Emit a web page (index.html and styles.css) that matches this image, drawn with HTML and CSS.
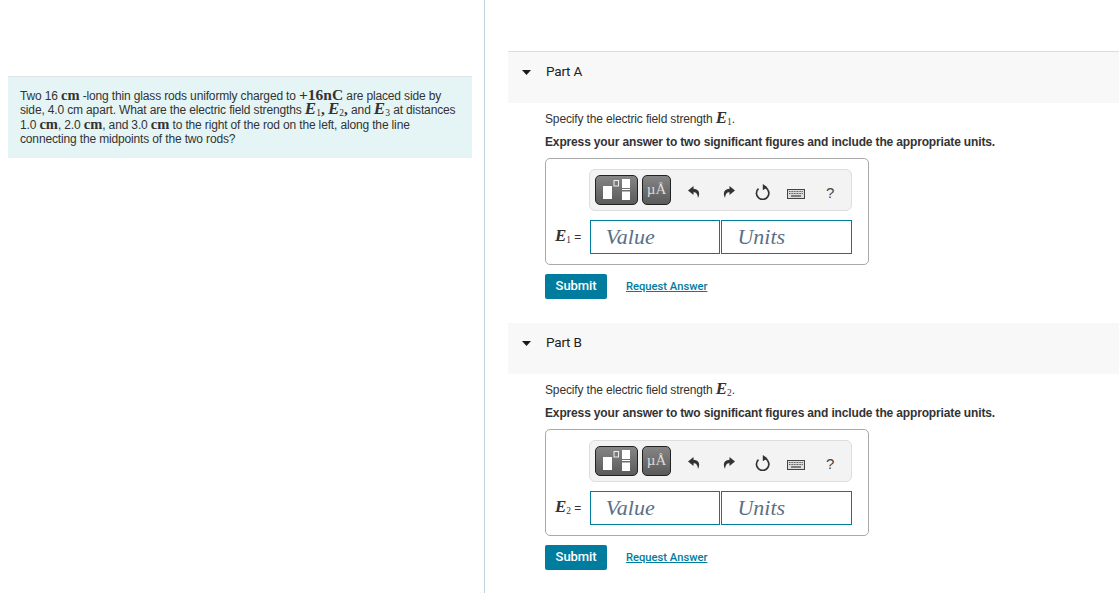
FILE: index.html
```html
<!DOCTYPE html>
<html lang="en">
<head>
    <meta charset="UTF-8">
    <title>Part A and Part B</title>
    <link rel="stylesheet" href="styles.css">
</head>
<body>
    <div class="page">
        <!-- problem statement -->
        <div class="left-col">
            <div class="problem">
                Two 16 <span class="m">cm</span> -long thin glass rods uniformly charged to <span class="m big">+16nC</span> are placed side by<br>
                side, 4.0 cm apart. What are the electric field strengths <span class="m big"><i>E</i><sub>1</sub>,</span> <span class="m big"><i>E</i><sub>2</sub>,</span> and <span class="m big"><i>E</i><sub>3</sub></span> at distances<br>
                1.0 <span class="m">cm</span>, 2.0 <span class="m">cm</span>, and 3.0 <span class="m">cm</span> to the right of the rod on the left, along the line<br>
                connecting the midpoints of the two rods?
            </div>
        </div>

        <div class="right-col">
            <!-- part a -->
            <section class="part">
                <div class="part-head">
                    <svg class="caret" width="9" height="5" viewBox="0 0 9 5"><path d="M0 0h9L4.5 5z" fill="#1a1a1a"/></svg>
                    <span>Part A</span>
                </div>
                <div class="part-body">
                    <p class="ask">Specify the electric field strength <span class="m big"><i>E</i><sub>1</sub></span>.</p>
                    <p class="express">Express your answer to two significant figures and include the appropriate units.</p>
                    <div class="answer-box">
                        <div class="toolbar">
                            <button class="tool tool-frac">
                                <svg width="32" height="24" viewBox="0 0 32 24">
                                    <rect x="2" y="8" width="9" height="13" fill="#fff"/>
                                    <rect x="13" y="2.500" width="4.500" height="5.500" fill="none" stroke="#eee"/>
                                    <rect x="21" y="1" width="8" height="9" fill="#fff"/>
                                    <rect x="21" y="11" width="8" height="1" fill="#fff"/>
                                    <rect x="21" y="13.500" width="8" height="8.500" fill="#fff"/>
                                </svg>
                            </button>
                            <button class="tool tool-unit">&micro;&Aring;</button>
                            <svg class="ico ico-undo" width="12" height="12" viewBox="0 0 12 12"><path d="M5.500 0 0 4.500 5.500 9V6.300C8 6.300 9.500 7.500 10 12 12.500 7 11 3 5.500 2.800z" fill="#333"/></svg>
                            <svg class="ico ico-redo" width="12" height="12" viewBox="0 0 12 12"><path d="M6.500 0 12 4.500 6.500 9V6.300C4 6.300 2.500 7.500 2 12-.5 7 1 3 6.500 2.800z" fill="#333"/></svg>
                            <svg class="ico ico-reset" width="16" height="16" viewBox="0 0 16 16"><path d="M10.200 3.600A6.200 6.200 0 1 1 3.500 4.600" fill="none" stroke="#333" stroke-width="1.700"/><path d="M7.800 0l4.700 3.300-4.700 3z" fill="#333"/></svg>
                            <svg class="ico ico-keys" width="18" height="10" viewBox="0 0 18 10"><rect x=".5" y=".5" width="17" height="9" fill="#ddd" stroke="#444"/><path d="M2 2.500h14M2 4.500h14" stroke="#555" stroke-dasharray="1 .6"/><path d="M4 7h10" stroke="#555" stroke-width="1.400"/></svg>
                            <span class="help">?</span>
                        </div>
                        <div class="input-row">
                            <label class="eq"><span class="m big"><i>E</i><sub>1</sub></span> =</label>
                            <div class="field field-value">Value</div>
                            <div class="field field-units">Units</div>
                        </div>
                    </div>
                    <div class="actions">
                        <button class="submit">Submit</button>
                        <a class="request" href="#">Request Answer</a>
                    </div>
                </div>
            </section>

            <!-- part b -->
            <section class="part part-b">
                <div class="part-head">
                    <svg class="caret" width="9" height="5" viewBox="0 0 9 5"><path d="M0 0h9L4.5 5z" fill="#1a1a1a"/></svg>
                    <span>Part B</span>
                </div>
                <div class="part-body">
                    <p class="ask">Specify the electric field strength <span class="m big"><i>E</i><sub>2</sub></span>.</p>
                    <p class="express">Express your answer to two significant figures and include the appropriate units.</p>
                    <div class="answer-box">
                        <div class="toolbar">
                            <button class="tool tool-frac">
                                <svg width="32" height="24" viewBox="0 0 32 24">
                                    <rect x="2" y="8" width="9" height="13" fill="#fff"/>
                                    <rect x="13" y="2.500" width="4.500" height="5.500" fill="none" stroke="#eee"/>
                                    <rect x="21" y="1" width="8" height="9" fill="#fff"/>
                                    <rect x="21" y="11" width="8" height="1" fill="#fff"/>
                                    <rect x="21" y="13.500" width="8" height="8.500" fill="#fff"/>
                                </svg>
                            </button>
                            <button class="tool tool-unit">&micro;&Aring;</button>
                            <svg class="ico ico-undo" width="12" height="12" viewBox="0 0 12 12"><path d="M5.500 0 0 4.500 5.500 9V6.300C8 6.300 9.500 7.500 10 12 12.500 7 11 3 5.500 2.800z" fill="#333"/></svg>
                            <svg class="ico ico-redo" width="12" height="12" viewBox="0 0 12 12"><path d="M6.500 0 12 4.500 6.500 9V6.300C4 6.300 2.500 7.500 2 12-.5 7 1 3 6.500 2.800z" fill="#333"/></svg>
                            <svg class="ico ico-reset" width="16" height="16" viewBox="0 0 16 16"><path d="M10.200 3.600A6.200 6.200 0 1 1 3.500 4.600" fill="none" stroke="#333" stroke-width="1.700"/><path d="M7.800 0l4.700 3.300-4.700 3z" fill="#333"/></svg>
                            <svg class="ico ico-keys" width="18" height="10" viewBox="0 0 18 10"><rect x=".5" y=".5" width="17" height="9" fill="#ddd" stroke="#444"/><path d="M2 2.500h14M2 4.500h14" stroke="#555" stroke-dasharray="1 .6"/><path d="M4 7h10" stroke="#555" stroke-width="1.400"/></svg>
                            <span class="help">?</span>
                        </div>
                        <div class="input-row">
                            <label class="eq"><span class="m big"><i>E</i><sub>2</sub></span> =</label>
                            <div class="field field-value">Value</div>
                            <div class="field field-units">Units</div>
                        </div>
                    </div>
                    <div class="actions">
                        <button class="submit">Submit</button>
                        <a class="request" href="#">Request Answer</a>
                    </div>
                </div>
            </section>
        </div>
    </div>
</body>
</html>
```

FILE: styles.css
```css
:root {
    --teal: #007c9e;
    --text: #333;
}

body {
    margin: 0;
    background: #fff;
    color: var(--text);
    font-family: "Liberation Sans", Arial, sans-serif;
    font-size: 12px;
    letter-spacing: -0.15px;
    overflow: hidden;
}

.page {
    display: flex;
    height: 593px;
}

.left-col {
    width: 464px;
    flex: none;
    border-right: 1px solid #c3d3de;
    padding: 76px 12px 0 8px;
}

.problem {
    height: 57px;
    padding: 12px;
    background: #e5f5f6;
    border-top: 1px solid #dde6ea;
    line-height: 14.4px;
    white-space: nowrap;
}

.m {
    font-family: "Liberation Serif", serif;
    font-size: 14.500px;
    font-weight: bold;
    letter-spacing: 0;
    line-height: 0;
}

.m.big {
    font-size: 15.5px;
}

.m i {
    font-size: 17px;
}

.m sub {
    font-size: 9.5px;
    font-weight: normal;
    line-height: 0;
    vertical-align: -2px;
}

.right-col {
    flex: 1;
    padding: 51px 0 0 23px;
}

.part-head {
    height: 52px;
    box-sizing: border-box;
    display: flex;
    align-items: flex-start;
    gap: 15px;
    padding: 12px 0 0 14px;
    background: #f8f8f8;
    border-top: 1px solid #ddd;
    font-family: Roboto, sans-serif;
    font-size: 13.5px;
    line-height: 15px;
    letter-spacing: -0.2px;
    color: #222;
}

.caret {
    margin-top: 6px;
}

.part-body {
    padding: 7px 0 0 37px;
}

.ask {
    margin: 0;
    height: 24px;
    line-height: 19px;
}

.express {
    margin: 0;
    height: 24px;
    padding-top: 1px;
    box-sizing: border-box;
    font-weight: bold;
    line-height: 14px;
}

.answer-box {
    width: 324px;
    height: 107px;
    box-sizing: border-box;
    border: 1px solid #a9a9a9;
    border-radius: 5px;
    padding: 10px 16px 0 43px;
}

.toolbar {
    height: 42px;
    box-sizing: border-box;
    display: flex;
    align-items: flex-start;
    padding: 5px 0 0 5px;
    background: #f3f3f3;
    border: 1px solid #ddd;
    border-radius: 6px;
}

.tool {
    height: 30px;
    padding: 0;
    display: flex;
    align-items: center;
    justify-content: center;
    background: linear-gradient(#858585, #5a5a5a);
    border: 1px solid #222;
    border-radius: 5px;
}

.tool-frac {
    width: 43px;
}

.tool-unit {
    width: 29px;
    margin-left: 4px;
    padding-bottom: 2px;
    font-family: "Liberation Serif", serif;
    font-size: 15px;
    color: #ddd;
}

.ico {
    flex: none;
}

.ico-undo {
    margin: 11px 0 0 17px;
}

.ico-redo {
    margin: 11px 0 0 23px;
}

.ico-reset {
    margin: 9px 0 0 20px;
}

.ico-keys {
    margin: 14px 0 0 16px;
}

.help {
    margin: 9px 0 0 21px;
    font-size: 15px;
    line-height: 18px;
    color: #444;
}

.input-row {
    display: flex;
    align-items: center;
    margin: 9px 0 0 -34px;
}

.eq {
    width: 35px;
    white-space: nowrap;
}

.field {
    height: 34px;
    box-sizing: border-box;
    padding-left: 15px;
    border: 1px solid var(--teal);
    font-family: "Liberation Serif", serif;
    font-style: italic;
    font-size: 22px;
    line-height: 32px;
    letter-spacing: 0;
    color: #5a6f85;
}

.field-value {
    width: 131px;
    margin-right: 1px;
}

.field-units {
    width: 131px;
}

.actions {
    display: flex;
    align-items: center;
    margin-top: 9px;
}

.submit {
    width: 62px;
    height: 25px;
    padding: 0 0 2px;
    background: var(--teal);
    border: none;
    border-radius: 2px;
    font-family: Roboto, sans-serif;
    font-size: 13px;
    font-weight: 500;
    letter-spacing: -0.1px;
    color: #fff;
}

.request {
    margin-left: 19px;
    font-family: Roboto, sans-serif;
    font-size: 11.2px;
    font-weight: 500;
    letter-spacing: 0;
    color: var(--teal);
}

.part-b {
    margin-top: 24px;
}

.part-b .part-head {
    height: 51px;
    border-top: none;
}
```
